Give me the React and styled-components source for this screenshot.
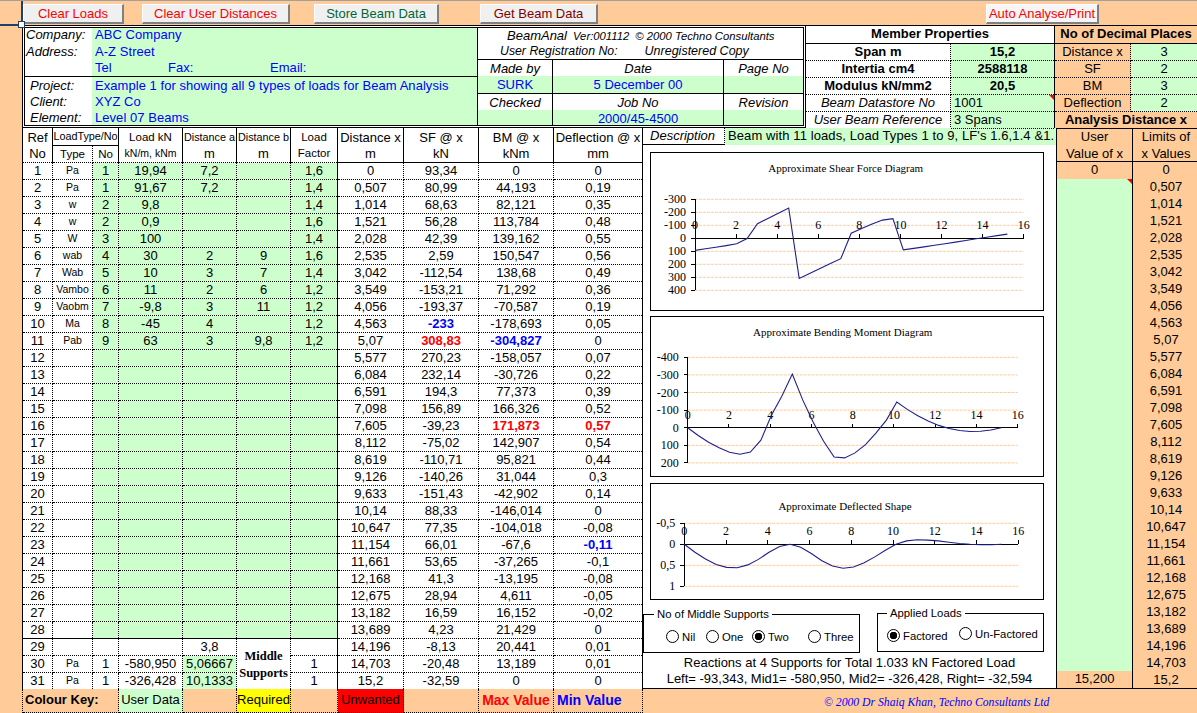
import React from 'react';
import styled, { createGlobalStyle } from 'styled-components';

const ORANGE = '#ffcc99';
const GREEN = '#ccffcc';
const BLUE = '#0000ff';

const GlobalStyle = createGlobalStyle`
  html, body {
    margin: 0;
    padding: 0;
    background: ${ORANGE};
  }
  body {
    font-family: "Liberation Sans", Arial, sans-serif;
    font-size: 13px;
    color: #000;
  }
  * { box-sizing: border-box; }
`;

const Page = styled.div`
  width: 1197px;
  height: 713px;
  overflow: hidden;
  background: ${ORANGE};
`;

/* ---------- toolbar ---------- */

const Toolbar = styled.div`
  display: flex;
  align-items: flex-start;
  height: 25px;
  padding-top: 3px;
  padding-left: 23px;
  border-top: 1px solid #a0a0a0;
  position: relative;
`;

const CellCursor = styled.div`
  position: absolute;
  left: 0;
  top: 0;
  width: 23px;
  height: 25px;
  border-right: 2px solid #1f3f6f;
  border-bottom: 2px solid #1f3f6f;
  &::after {
    content: '';
    position: absolute;
    right: -4px;
    bottom: -4px;
    width: 5px;
    height: 5px;
    background: #fff;
    border: 1px solid #1f3f6f;
  }
`;

const ToolButton = styled.button`
  width: ${(p) => p.$w}px;
  height: 20px;
  margin: 0 ${(p) => p.$gap || 0}px 0 0;
  padding: 0;
  font: 13px "Liberation Sans", Arial, sans-serif;
  color: ${(p) => p.$color};
  background: ${(p) => p.$bg || '#f0f0f0'};
  border: none;
  border-top: 1px solid #fff;
  border-left: 1px solid #fff;
  border-right: 2px solid #808080;
  border-bottom: 2px solid #808080;
`;

/* ---------- header blocks ---------- */

const Header = styled.div`
  display: flex;
  height: 103px;
  margin-left: 22px;
`;

const TitleFrame = styled.div`
  display: flex;
  width: 786px;
  border: 3px double #000;
  background: #fff;
`;

const InfoBlock = styled.div`
  width: 453px;
  border-right: 1px solid #000;
  background: #fff;
`;

const InfoRow = styled.div`
  display: grid;
  grid-template-columns: 67px 1fr;
  height: ${(p) => p.$h}px;
  line-height: ${(p) => p.$lh || p.$h}px;
  border-top: ${(p) => (p.$rule ? '1px solid #000' : 'none')};
`;

const InfoLabel = styled.div`
  font-style: italic;
  padding-left: ${(p) => (p.$indent ? 5 : 1)}px;
  white-space: nowrap;
`;

const InfoValue = styled.div`
  display: flex;
  background: ${GREEN};
  color: ${BLUE};
  padding-left: 3px;
  white-space: nowrap;
  letter-spacing: 0.05px;
`;

const ContactItem = styled.span`
  width: ${(p) => p.$w}px;
`;

const JobBlock = styled.div`
  flex: 1;
  display: grid;
  grid-template-columns: 75px 171px 1fr;
  grid-template-rows: 32px 16px 18px 16px 15px;
`;

const Banner = styled.div`
  grid-column: 1 / span 3;
  border-bottom: 1px solid #000;
  font-style: italic;
  white-space: nowrap;
`;

const BannerLine = styled.div`
  height: 16px;
  line-height: 15px;
  font-size: ${(p) => p.$fs || 13}px;
  padding-left: ${(p) => p.$pad}px;
`;

const BannerSmall = styled.span`
  font-size: ${(p) => p.$fs || 11.3}px;
  margin-left: ${(p) => p.$gap || 0}px;
`;

const JobCell = styled.div`
  text-align: center;
  line-height: 15px;
  padding-top: 1px;
  font-style: ${(p) => (p.$fill ? 'normal' : 'italic')};
  color: ${(p) => (p.$fill ? BLUE : '#000')};
  background: ${(p) => (p.$fill ? GREEN : '#fff')};
  border-right: ${(p) => (p.$last ? 'none' : '1px solid #000')};
  border-bottom: ${(p) => (p.$rule ? '1px solid #000' : 'none')};
`;

const PropsBlock = styled.div`
  width: 248px;
  display: grid;
  grid-template-columns: 145px 103px;
  grid-template-rows: 18px repeat(5, 17px);
  border-top: 1px solid #000;
  background: #fff;
`;

const PropsTitle = styled.div`
  grid-column: 1 / span 2;
  text-align: center;
  font-weight: bold;
  line-height: 16px;
  border-bottom: 1px solid #000;
`;

const PropLabel = styled.div`
  text-align: center;
  white-space: nowrap;
  line-height: 16px;
  font-weight: ${(p) => (p.$plain ? 'normal' : 'bold')};
  font-style: ${(p) => (p.$plain ? 'italic' : 'normal')};
  border-bottom: 1px dotted #000;
  border-right: 1px dotted #000;
`;

const PropValue = styled.div`
  position: relative;
  background: ${GREEN};
  line-height: 16px;
  padding-left: ${(p) => (p.$plain ? 3 : 0)}px;
  text-align: ${(p) => (p.$plain ? 'left' : 'center')};
  font-weight: ${(p) => (p.$plain ? 'normal' : 'bold')};
  border-bottom: 1px dotted #000;
`;

const CommentMark = styled.span`
  position: absolute;
  top: 0;
  right: 0;
  width: 0;
  height: 0;
  border-top: 5px solid #ff0000;
  border-left: 5px solid transparent;
`;

const DecimalsBlock = styled.div`
  flex: 1;
  display: grid;
  grid-template-columns: 76px 66px;
  grid-template-rows: 18px repeat(4, 17px) 17px;
  border-top: 1px solid #000;
  border-left: 1px solid #000;
  margin-left: 0;
  background: ${ORANGE};
`;

const DecimalsTitle = styled.div`
  grid-column: 1 / span 2;
  text-align: center;
  font-weight: bold;
  line-height: 16px;
  white-space: nowrap;
  border-bottom: 1px solid #000;
`;

const DecimalLabel = styled.div`
  text-align: center;
  line-height: 16px;
  border-bottom: ${(p) => (p.$last ? '1px solid #000' : '1px dotted #000')};
  border-right: 1px dotted #000;
`;

const DecimalValue = styled.div`
  text-align: center;
  line-height: 16px;
  background: ${GREEN};
  border-bottom: ${(p) => (p.$last ? '1px solid #000' : '1px dotted #000')};
`;

/* ---------- load and results table ---------- */

const Body = styled.div`
  display: flex;
  height: 561px;
  margin-left: 22px;
`;

const Sheet = styled.table`
  width: 620px;
  height: 561px;
  table-layout: fixed;
  border-collapse: collapse;
  background: #fff;
  flex: none;
`;

const HeadCell = styled.td`
  height: 17px;
  padding: 1px 0 0;
  text-align: center;
  white-space: nowrap;
  overflow: hidden;
  line-height: 15px;
  font-size: ${(p) => p.$fs || 13}px;
  border-top: ${(p) => (p.$top ? '1px solid #000' : 'none')};
  border-left: ${(p) => (p.$left ? '1px solid #000' : 'none')};
  border-right: ${(p) => (p.$dottedRight ? '1px dotted #000' : '1px solid #000')};
  border-bottom: ${(p) => p.$under || 'none'};
`;

const Cell = styled.td`
  height: 17px;
  padding: 0 0 1px;
  text-align: center;
  white-space: nowrap;
  overflow: hidden;
  line-height: 15px;
  font-size: ${(p) => p.$fs || 13}px;
  font-weight: ${(p) => (p.$mark ? 'bold' : 'normal')};
  color: ${(p) => (p.$mark === 'max' ? '#ff0000' : p.$mark === 'min' ? BLUE : '#000')};
  background: ${(p) => (p.$fill ? GREEN : '#fff')};
  border-left: ${(p) => (p.$left ? '1px solid #000' : 'none')};
  border-right: 1px ${(p) => (p.$solidRight ? 'solid' : 'dotted')} #000;
  border-bottom: 1px ${(p) => (p.$solidBottom ? 'solid' : 'dotted')} #000;
`;

const MiddleSupports = styled(Cell)`
  vertical-align: bottom;
  padding: 0 0 7px;
  font-family: "Liberation Serif", "Times New Roman", serif;
  font-size: 12.5px;
  font-weight: bold;
  line-height: 17px;
  white-space: normal;
`;

/* ---------- charts column ---------- */

const ChartsPanel = styled.div`
  width: 413px;
  display: flex;
  flex-direction: column;
  border-bottom: 1px solid #000;
  background: #fff;
`;

const DescriptionRow = styled.div`
  display: flex;
  height: 17px;
  line-height: 16px;
  flex: none;
`;

const DescriptionLabel = styled.div`
  width: 82px;
  padding-left: 7px;
  font-style: italic;
  border-right: 1px dotted #000;
  border-bottom: 1px solid #000;
`;

const DescriptionText = styled.div`
  flex: 1;
  padding-left: 3px;
  white-space: nowrap;
  letter-spacing: 0.1px;
  background: ${GREEN};
`;

const ChartBox = styled.div`
  width: 394px;
  height: ${(p) => p.$h}px;
  margin: ${(p) => p.$gap}px 0 0 7px;
  border: 1px solid #000;
  flex: none;
`;

const ChartSvg = styled.svg`
  display: block;
  font-family: "Liberation Serif", "Times New Roman", serif;
`;

const OptionsRow = styled.div`
  display: flex;
  align-items: flex-start;
  flex: none;
  margin-top: 6px;
`;

const OptionGroup = styled.fieldset`
  width: ${(p) => p.$w}px;
  height: ${(p) => p.$h}px;
  margin: ${(p) => p.$top || 0}px ${(p) => p.$right || 0}px 0 0;
  padding: 0 0 0 ${(p) => p.$pad}px;
  border: 1px solid #000;
  display: flex;
  align-items: center;
  min-width: 0;
`;

const OptionTitle = styled.legend`
  margin-left: ${(p) => p.$at}px;
  padding: 0 3px;
  font-size: 11.3px;
  line-height: 14px;
  white-space: nowrap;
`;

const OptionLabel = styled.label`
  display: flex;
  align-items: center;
  width: ${(p) => p.$w}px;
  font-size: 11.3px;
  white-space: nowrap;
  margin-bottom: ${(p) => p.$raise || 0}px;
`;

const OptionRadio = styled.input.attrs({ type: 'radio' })`
  appearance: none;
  width: 13px;
  height: 13px;
  margin: 0 3px 0 0;
  border: 1px solid #000;
  border-radius: 50%;
  background: #fff;
  flex: none;
  &:checked {
    background: radial-gradient(circle, #000 0 3.5px, #fff 4px);
  }
`;

const Reactions = styled.div`
  margin-top: auto;
  padding-bottom: 1px;
  text-align: center;
  line-height: 16px;
  white-space: nowrap;
`;

/* ---------- right hand columns ---------- */

const DistanceColumns = styled.div`
  display: grid;
  grid-template-columns: 76px 66px;
  grid-template-rows: 34px 17px 1fr 17px;
  width: 142px;
  height: 561px;
  margin-right: -22px;
  border-left: 1px solid #000;
  border-bottom: 1px solid #000;
`;

const DistanceHead = styled.div`
  text-align: center;
  line-height: 17px;
  border-bottom: 1px solid #000;
  border-right: ${(p) => (p.$split ? '1px solid #000' : 'none')};
`;

const UserValue = styled.div`
  position: relative;
  text-align: center;
  line-height: 16px;
  border-right: 1px solid #000;
  background: ${(p) => (p.$fill ? GREEN : ORANGE)};
`;

const LimitsList = styled.div`
  grid-column: 2;
  grid-row: 2 / span 3;
`;

const LimitValue = styled.div`
  height: 17px;
  line-height: 16px;
  text-align: center;
`;

/* ---------- colour key ---------- */

const KeyBar = styled.div`
  display: flex;
  height: 24px;
  margin-left: 22px;
  border-left: 1px dotted #000;
`;

const KeyCell = styled.div`
  width: ${(p) => p.$w}px;
  flex: none;
  line-height: 22px;
  text-align: ${(p) => p.$align || 'center'};
  padding-left: ${(p) => p.$pad || 0}px;
  font-weight: ${(p) => (p.$bold ? 'bold' : 'normal')};
  font-size: ${(p) => p.$fs || 13}px;
  color: ${(p) => p.$color || '#000'};
  background: ${(p) => p.$bg || ORANGE};
  white-space: nowrap;
  border-right: 1px dotted #000;
  border-bottom: 1px dotted #000;
`;

const Credit = styled.div`
  flex: 1;
  padding-left: 181px;
  font: italic 11.7px/28px "Liberation Serif", "Times New Roman", serif;
  color: ${BLUE};
  white-space: nowrap;
`;

/* ---------- data ---------- */

const LOADS = [
  ['Pa', '1', '19,94', '7,2', '', '1,6'],
  ['Pa', '1', '91,67', '7,2', '', '1,4'],
  ['w', '2', '9,8', '', '', '1,4'],
  ['w', '2', '0,9', '', '', '1,6'],
  ['W', '3', '100', '', '', '1,4'],
  ['wab', '4', '30', '2', '9', '1,6'],
  ['Wab', '5', '10', '3', '7', '1,4'],
  ['Vambo', '6', '11', '2', '6', '1,2'],
  ['Vaobm', '7', '-9,8', '3', '11', '1,2'],
  ['Ma', '8', '-45', '4', '', '1,2'],
  ['Pab', '9', '63', '3', '9,8', '1,2'],
];

const RESULTS = [
  ['0', '93,34', '0', '0'],
  ['0,507', '80,99', '44,193', '0,19'],
  ['1,014', '68,63', '82,121', '0,35'],
  ['1,521', '56,28', '113,784', '0,48'],
  ['2,028', '42,39', '139,162', '0,55'],
  ['2,535', '2,59', '150,547', '0,56'],
  ['3,042', '-112,54', '138,68', '0,49'],
  ['3,549', '-153,21', '71,292', '0,36'],
  ['4,056', '-193,37', '-70,587', '0,19'],
  ['4,563', '-233', '-178,693', '0,05'],
  ['5,07', '308,83', '-304,827', '0'],
  ['5,577', '270,23', '-158,057', '0,07'],
  ['6,084', '232,14', '-30,726', '0,22'],
  ['6,591', '194,3', '77,373', '0,39'],
  ['7,098', '156,89', '166,326', '0,52'],
  ['7,605', '-39,23', '171,873', '0,57'],
  ['8,112', '-75,02', '142,907', '0,54'],
  ['8,619', '-110,71', '95,821', '0,44'],
  ['9,126', '-140,26', '31,044', '0,3'],
  ['9,633', '-151,43', '-42,902', '0,14'],
  ['10,14', '88,33', '-146,014', '0'],
  ['10,647', '77,35', '-104,018', '-0,08'],
  ['11,154', '66,01', '-67,6', '-0,11'],
  ['11,661', '53,65', '-37,265', '-0,1'],
  ['12,168', '41,3', '-13,195', '-0,08'],
  ['12,675', '28,94', '4,611', '-0,05'],
  ['13,182', '16,59', '16,152', '-0,02'],
  ['13,689', '4,23', '21,429', '0'],
  ['14,196', '-8,13', '20,441', '0,01'],
  ['14,703', '-20,48', '13,189', '0,01'],
  ['15,2', '-32,59', '0', '0'],
];

// row:column of the highlighted results
const MARKS = {
  '9:1': 'min',
  '10:1': 'max',
  '10:2': 'min',
  '15:2': 'max',
  '15:3': 'max',
  '22:3': 'min',
};

const COLUMN_WIDTHS = [30, 40, 26, 64, 54, 54, 47, 66, 75, 75, 89];

const toNumber = (text) => parseFloat(text.replace(',', '.'));

const CHARTS = {
  shear: {
    title: 'Approximate Shear Force Diagram',
    titleX: 194.7,
    titleY: 19,
    h: 159,
    x0: 44,
    x1: 372.7,
    y0: 85.3,
    scale: 0.13,
    ticks: [-300, -200, -100, 0, 100, 200, 300, 400],
    column: 1,
  },
  moment: {
    title: 'Approximate Bending Moment Diagram',
    titleX: 191.7,
    titleY: 19,
    h: 161,
    x0: 36.7,
    x1: 366.7,
    y0: 110.7,
    scale: 0.176,
    ticks: [-400, -300, -200, -100, 0, 100, 200],
    column: 2,
  },
  deflection: {
    title: 'Approximate Deflected Shape',
    titleX: 194,
    titleY: 26,
    h: 117,
    x0: 33.3,
    x1: 367.3,
    y0: 60.3,
    scale: 42,
    ticks: [-0.5, 0, 0.5, 1],
    column: 3,
  },
};

/* ---------- pieces ---------- */

const Chart = ({ spec, gap }) => {
  const { title, titleX, titleY, h, x0, x1, y0, scale, ticks, column } = spec;
  const perUnit = (x1 - x0) / 16;
  const points = RESULTS.map((row) => {
    const x = x0 + toNumber(row[0]) * perUnit;
    const y = y0 + toNumber(row[column]) * scale;
    return `${x.toFixed(1)},${y.toFixed(1)}`;
  }).join(' ');
  const top = y0 + ticks[0] * scale;
  const bottom = y0 + ticks[ticks.length - 1] * scale;

  return (
    <ChartBox $h={h} $gap={gap}>
      <ChartSvg width="392" height={h - 2}>
        <text x={titleX} y={titleY} textAnchor="middle" fontSize="11">
          {title}
        </text>
        {ticks.map((t) => {
          const y = y0 + t * scale;
          return (
            <g key={t}>
              {t !== 0 && (
                <line x1={x0} x2={x1} y1={y} y2={y} stroke={ORANGE} strokeDasharray="3 1" />
              )}
              <line x1={x0 - 4} x2={x0} y1={y} y2={y} stroke="#000" shapeRendering="crispEdges" />
              <text x={x0 - 9} y={y + 4} textAnchor="end" fontSize="12">
                {String(t).replace('.', ',')}
              </text>
            </g>
          );
        })}
        <line x1={x0} x2={x0} y1={top} y2={bottom} stroke="#000" shapeRendering="crispEdges" />
        <line x1={x0} x2={x1} y1={y0} y2={y0} stroke="#000" shapeRendering="crispEdges" />
        {[0, 2, 4, 6, 8, 10, 12, 14, 16].map((n) => {
          const x = x0 + n * perUnit;
          return (
            <g key={n}>
              <line x1={x} x2={x} y1={y0 - 4} y2={y0} stroke="#000" shapeRendering="crispEdges" />
              <text x={x} y={y0 - 9} textAnchor="middle" fontSize="12">
                {n}
              </text>
            </g>
          );
        })}
        <polyline points={points} fill="none" stroke="#1f1f8c" strokeWidth="1.1" />
      </ChartSvg>
    </ChartBox>
  );
};

const SheetRow = ({ index }) => {
  const load = LOADS[index];
  const result = RESULTS[index];
  const ruled = index === 27;
  const last = index === 30;
  const rowNo = index + 1;

  let cells;
  if (index >= 28) {
    const supports = {
      28: ['', '', '', '3,8', ''],
      29: ['Pa', '1', '-580,950', '5,06667', '1'],
      30: ['Pa', '1', '-326,428', '10,1333', '1'],
    }[index];
    cells = (
      <>
        <Cell $fs={10.5} $solidBottom={last}>{supports[0]}</Cell>
        <Cell $solidBottom={last}>{supports[1]}</Cell>
        <Cell $solidBottom={last}>{supports[2]}</Cell>
        <Cell $fill={index > 28} $solidBottom={last}>{supports[3]}</Cell>
        {index === 28 && (
          <MiddleSupports rowSpan={3} $solidBottom>
            Middle Supports
          </MiddleSupports>
        )}
        <Cell $solidRight $solidBottom={last}>{supports[4]}</Cell>
      </>
    );
  } else {
    const values = load || ['', '', '', '', '', ''];
    cells = values.map((v, i) => (
      <Cell
        key={i}
        $fill={i > 0}
        $fs={i === 0 ? 10.5 : 13}
        $solidRight={i === 5}
        $solidBottom={ruled}
      >
        {v}
      </Cell>
    ));
  }

  return (
    <tr>
      <Cell $left $solidBottom={ruled || last}>{rowNo}</Cell>
      {cells}
      {result.map((v, i) => (
        <Cell
          key={i}
          $mark={MARKS[`${index}:${i}`]}
          $solidRight={i === 3}
          $solidBottom={last}
        >
          {v}
        </Cell>
      ))}
    </tr>
  );
};

const App = () => (
  <Page>
    <GlobalStyle />
    <Toolbar>
      <CellCursor />
      <ToolButton $w={101} $gap={18} $color="#ff0000">Clear Loads</ToolButton>
      <ToolButton $w={148} $gap={24} $color="#ff0000">Clear User Distances</ToolButton>
      <ToolButton $w={125} $gap={41} $color="#006633">Store Beam Data</ToolButton>
      <ToolButton $w={118} $gap={388} $color="#800000">Get Beam Data</ToolButton>
      <ToolButton $w={113} $color="#ff0000" $bg="#f6f6f6">Auto Analyse/Print</ToolButton>
    </Toolbar>

    <Header>
      <TitleFrame>
        <InfoBlock>
          <InfoRow $h={15} $lh={13}>
            <InfoLabel>Company:</InfoLabel>
            <InfoValue>ABC Company</InfoValue>
          </InfoRow>
          <InfoRow $h={17}>
            <InfoLabel>Address:</InfoLabel>
            <InfoValue>A-Z Street</InfoValue>
          </InfoRow>
          <InfoRow $h={16}>
            <InfoLabel />
            <InfoValue>
              <ContactItem $w={73}>Tel</ContactItem>
              <ContactItem $w={102}>Fax:</ContactItem>
              <ContactItem $w={80}>Email:</ContactItem>
            </InfoValue>
          </InfoRow>
          <InfoRow $h={17} $rule>
            <InfoLabel $indent>Project:</InfoLabel>
            <InfoValue>Example 1 for showing all 9 types of loads for Beam Analysis</InfoValue>
          </InfoRow>
          <InfoRow $h={17}>
            <InfoLabel $indent>Client:</InfoLabel>
            <InfoValue>XYZ Co</InfoValue>
          </InfoRow>
          <InfoRow $h={15}>
            <InfoLabel $indent>Element:</InfoLabel>
            <InfoValue>Level 07 Beams</InfoValue>
          </InfoRow>
        </InfoBlock>
        <JobBlock>
          <Banner>
            <BannerLine $pad={29}>
              BeamAnal
              <BannerSmall $gap={6}>Ver:001112</BannerSmall>
              <BannerSmall $gap={6}>© 2000 Techno Consultants</BannerSmall>
            </BannerLine>
            <BannerLine $pad={22} $fs={12.3}>
              User Registration No:
              <BannerSmall $gap={27} $fs={12.5}>Unregistered Copy</BannerSmall>
            </BannerLine>
          </Banner>
          <JobCell>Made by</JobCell>
          <JobCell>Date</JobCell>
          <JobCell $last>Page No</JobCell>
          <JobCell $fill $rule>SURK</JobCell>
          <JobCell $fill $rule>5 December 00</JobCell>
          <JobCell $fill $rule $last />
          <JobCell>Checked</JobCell>
          <JobCell>Job No</JobCell>
          <JobCell $last>Revision</JobCell>
          <JobCell $fill />
          <JobCell $fill>2000/45-4500</JobCell>
          <JobCell $fill $last />
        </JobBlock>
      </TitleFrame>

      <PropsBlock>
        <PropsTitle>Member Properties</PropsTitle>
        <PropLabel>Span m</PropLabel>
        <PropValue>15,2</PropValue>
        <PropLabel>Intertia cm4</PropLabel>
        <PropValue>2588118</PropValue>
        <PropLabel>Modulus kN/mm2</PropLabel>
        <PropValue>20,5</PropValue>
        <PropLabel $plain>Beam Datastore No</PropLabel>
        <PropValue $plain>1001<CommentMark /></PropValue>
        <PropLabel $plain>User Beam Reference</PropLabel>
        <PropValue $plain>3 Spans</PropValue>
      </PropsBlock>

      <DecimalsBlock>
        <DecimalsTitle>No of Decimal Places</DecimalsTitle>
        <DecimalLabel>Distance x</DecimalLabel>
        <DecimalValue>3</DecimalValue>
        <DecimalLabel>SF</DecimalLabel>
        <DecimalValue>2</DecimalValue>
        <DecimalLabel>BM</DecimalLabel>
        <DecimalValue>3</DecimalValue>
        <DecimalLabel>Deflection</DecimalLabel>
        <DecimalValue>2</DecimalValue>
        <DecimalsTitle>Analysis Distance x</DecimalsTitle>
      </DecimalsBlock>
    </Header>

    <Body>
      <Sheet>
        <colgroup>
          {COLUMN_WIDTHS.map((w, i) => (
            <col key={i} width={w} />
          ))}
        </colgroup>
        <tbody>
          <tr>
            <HeadCell $left>Ref</HeadCell>
            <HeadCell colSpan={2} $fs={10.8} $under="1px solid #000">LoadType/No</HeadCell>
            <HeadCell $fs={11.5}>Load kN</HeadCell>
            <HeadCell $fs={10.8}>Distance a</HeadCell>
            <HeadCell $fs={10.8}>Distance b</HeadCell>
            <HeadCell $fs={11.5}>Load</HeadCell>
            <HeadCell>Distance x</HeadCell>
            <HeadCell>SF @ x</HeadCell>
            <HeadCell>BM @ x</HeadCell>
            <HeadCell>Deflection @ x</HeadCell>
          </tr>
          <tr>
            <HeadCell $left $under="1px dotted #000">No</HeadCell>
            <HeadCell $fs={11.5} $dottedRight $under="1px dotted #000">Type</HeadCell>
            <HeadCell $fs={11.5} $under="1px dotted #000">No</HeadCell>
            <HeadCell $fs={10.5} $under="1px dotted #000">kN/m, kNm</HeadCell>
            <HeadCell $under="1px dotted #000">m</HeadCell>
            <HeadCell $under="1px dotted #000">m</HeadCell>
            <HeadCell $fs={11.5} $under="1px dotted #000">Factor</HeadCell>
            <HeadCell $under="1px solid #000">m</HeadCell>
            <HeadCell $under="1px solid #000">kN</HeadCell>
            <HeadCell $under="1px solid #000">kNm</HeadCell>
            <HeadCell $under="1px solid #000">mm</HeadCell>
          </tr>
          {RESULTS.map((_, index) => (
            <SheetRow key={index} index={index} />
          ))}
        </tbody>
      </Sheet>

      <ChartsPanel>
        <DescriptionRow>
          <DescriptionLabel>Description</DescriptionLabel>
          <DescriptionText>Beam with 11 loads, Load Types 1 to 9, LF's 1.6,1.4 &amp;1.</DescriptionText>
        </DescriptionRow>
        <Chart spec={CHARTS.shear} gap={7} />
        <Chart spec={CHARTS.moment} gap={5} />
        <Chart spec={CHARTS.deflection} gap={6} />
        <OptionsRow>
          <OptionGroup $w={217} $h={46} $top={1} $right={17} $pad={22}>
            <OptionTitle $at={-12}>No of Middle Supports</OptionTitle>
            <OptionLabel $w={40}><OptionRadio name="supports" />Nil</OptionLabel>
            <OptionLabel $w={46}><OptionRadio name="supports" />One</OptionLabel>
            <OptionLabel $w={56}><OptionRadio name="supports" defaultChecked />Two</OptionLabel>
            <OptionLabel $w={48}><OptionRadio name="supports" />Three</OptionLabel>
          </OptionGroup>
          <OptionGroup $w={167} $h={46} $pad={9}>
            <OptionTitle $at={0}>Applied Loads</OptionTitle>
            <OptionLabel $w={72}><OptionRadio name="loads" defaultChecked />Factored</OptionLabel>
            <OptionLabel $w={80} $raise={4}><OptionRadio name="loads" />Un-Factored</OptionLabel>
          </OptionGroup>
        </OptionsRow>
        <Reactions>
          Reactions at 4 Supports for Total 1.033 kN Factored Load
          <br />
          Left= -93,343, Mid1= -580,950, Mid2= -326,428, Right= -32,594
        </Reactions>
      </ChartsPanel>

      <DistanceColumns>
        <DistanceHead $split>User<br />Value of x</DistanceHead>
        <DistanceHead>Limits of<br />x Values</DistanceHead>
        <UserValue>0</UserValue>
        <UserValue $fill><CommentMark /></UserValue>
        <UserValue>15,200</UserValue>
        <LimitsList>
          {RESULTS.map((row) => (
            <LimitValue key={row[0]}>{row[0]}</LimitValue>
          ))}
        </LimitsList>
      </DistanceColumns>
    </Body>

    <KeyBar>
      <KeyCell $w={96} $bold $align="left" $pad={2}>Colour Key:</KeyCell>
      <KeyCell $w={64} $bg={GREEN}>User Data</KeyCell>
      <KeyCell $w={54} />
      <KeyCell $w={54} $bg="#ffff00">Required</KeyCell>
      <KeyCell $w={47} />
      <KeyCell $w={66} $bg="#ff0000">Unwanted</KeyCell>
      <KeyCell $w={75} />
      <KeyCell $w={75} $bold $fs={14} $color="#ff0000">Max Value</KeyCell>
      <KeyCell $w={89} $bold $fs={14} $color={BLUE} $align="left" $pad={3}>Min Value</KeyCell>
      <Credit>© 2000 Dr Shaiq Khan, Techno Consultants Ltd</Credit>
    </KeyBar>
  </Page>
);

export default App;
